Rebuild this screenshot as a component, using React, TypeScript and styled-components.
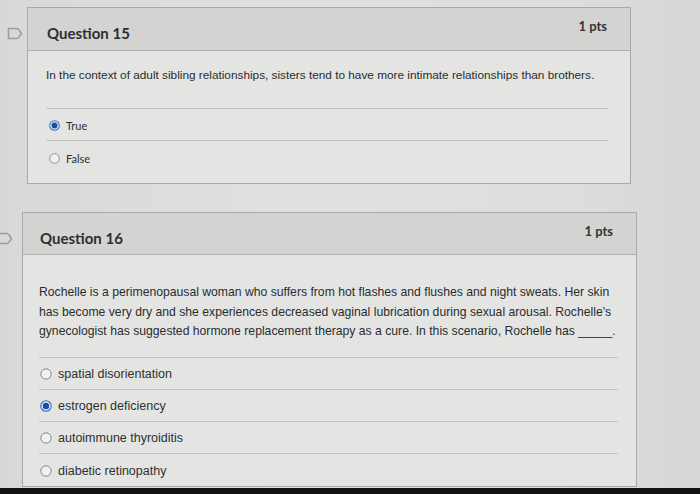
import React from 'react';
import styled, { createGlobalStyle } from 'styled-components';

const GlobalStyle = createGlobalStyle`
  html, body {
    margin: 0;
    padding: 0;
    background: #dcdcdb;
  }
  * { box-sizing: border-box; }
`;

const Page = styled.div`
  width: 700px;
  height: 494px;
  overflow: hidden;
  display: flex;
  flex-direction: column;
  background: linear-gradient(90deg, #d8d8d7 0%, #e0e0df 40%, #dedede 80%, #d6d6d5 100%);
`;

const Content = styled.div`
  flex: 1;
  overflow: hidden;
  display: flex;
  flex-direction: column;
  padding-top: 7px;
  gap: 28px;
`;

const BottomBar = styled.div`
  height: 6px;
  background: #111;
`;

const QuestionRow = styled.div`
  display: flex;
  align-items: flex-start;
`;

const Gutter = styled.div<{ width: number; top: number; left: number }>`
  width: ${p => p.width}px;
  flex-shrink: 0;
  overflow: hidden;
  padding-top: ${p => p.top}px;
  svg {
    display: block;
    margin-left: ${p => p.left}px;
  }
`;

const Card = styled.div<{ width: number }>`
  width: ${p => p.width}px;
  border: 1px solid #a9a9a8;
  background: #e4e5e3;
`;

const Header = styled.div<{ height: number }>`
  height: ${p => p.height}px;
  background: #d3d3d2;
  border-bottom: 1px solid #b2b2b1;
  display: flex;
  align-items: center;
  justify-content: space-between;
  padding: 0 23px 0 19px;
  font-family: Lato, "Liberation Sans", sans-serif;
  color: #2b2f33;
`;

const Title = styled.h2<{ shift?: number }>`
  margin: 8px 0 0 ${p => p.shift ?? 0}px;
  font-size: 15px;
  font-weight: 700;
`;

const Points = styled.span`
  font-size: 13px;
  font-weight: 700;
  color: #333;
  margin-top: -6px;
`;

const Body = styled.div<{ pad: string }>`
  padding: ${p => p.pad};
`;

const Prompt = styled.p<{ size: number; lh: number; gap: number }>`
  margin: 0 0 ${p => p.gap}px;
  font-family: "Liberation Sans", Arial, sans-serif;
  font-size: ${p => p.size}px;
  line-height: ${p => p.lh}px;
  color: #2a2c2e;
  white-space: nowrap;
`;

const Answers = styled.div<{ inset: number }>`
  border-top: 1px solid #c3c4c2;
  margin-right: ${p => p.inset}px;
`;

const Answer = styled.label<{ height: number; last?: boolean; font: string; size: number; indent: number }>`
  height: ${p => p.height}px;
  display: flex;
  align-items: center;
  gap: 6px;
  padding-left: ${p => p.indent}px;
  padding-top: 2px;
  border-bottom: ${p => (p.last ? 'none' : '1px solid #c3c4c2')};
  font-family: ${p => p.font};
  font-size: ${p => p.size}px;
  color: #2e3032;
`;

const Radio = ({ checked, size }: { checked?: boolean; size: number }) => (
  <svg width={size} height={size} viewBox="0 0 12 12">
    {checked ? (
      <>
        <circle cx="6" cy="6" r="5.3" fill="#dce6f6" stroke="#3d6fbf" strokeWidth="1.1" />
        <circle cx="6" cy="6" r="3.2" fill="#1d4ea6" />
      </>
    ) : (
      <circle cx="6" cy="6" r="5.2" fill="#f1f1f0" stroke="#7d7f80" strokeWidth="0.9" />
    )}
  </svg>
);

const Bookmark = () => (
  <svg width="16" height="13" viewBox="0 0 16 13">
    <path
      d="M1.5 1.5 H9.5 Q11 1.5 12.1 3.1 L14 5.8 Q14.5 6.5 14 7.2 L12.1 9.9 Q11 11.5 9.5 11.5 H1.5 Z"
      fill="none"
      stroke="#9c9c9b"
      strokeWidth="1.6"
      strokeLinejoin="round"
    />
  </svg>
);

const sans = '"Liberation Sans", Arial, sans-serif';
const lato = 'Lato, "Liberation Sans", sans-serif';

const options16 = [
  { text: 'spatial disorientation', checked: false },
  { text: 'estrogen deficiency', checked: true },
  { text: 'autoimmune thyroiditis', checked: false },
  { text: 'diabetic retinopathy', checked: false },
];

export default function App() {
  return (
    <>
      <GlobalStyle />
      <Page>
        <Content>
          <QuestionRow>
            <Gutter width={27} top={20} left={7}>
              <Bookmark />
            </Gutter>
            <Card width={604}>
              <Header height={43}>
                <Title>Question 15</Title>
                <Points>1 pts</Points>
              </Header>
              <Body pad="16px 0 10px 18px">
                <Prompt size={11.8} lh={16} gap={25}>
                  In the context of adult sibling relationships, sisters tend to have more intimate relationships than brothers.
                </Prompt>
                <Answers inset={22}>
                  <Answer height={32} font={lato} size={11} indent={3}>
                    <Radio checked size={11} />
                    True
                  </Answer>
                  <Answer height={32} font={lato} size={11} indent={3} last>
                    <Radio size={11} />
                    False
                  </Answer>
                </Answers>
              </Body>
            </Card>
          </QuestionRow>

          <QuestionRow>
            <Gutter width={22} top={20} left={-3}>
              <Bookmark />
            </Gutter>
            <Card width={615}>
              <Header height={42}>
                <Title shift={-2}>Question 16</Title>
                <Points>1 pts</Points>
              </Header>
              <Body pad="28px 0 0 16px">
                <Prompt size={12.2} lh={19.5} gap={15}>
                  Rochelle is a perimenopausal woman who suffers from hot flashes and flushes and night sweats. Her skin
                  <br />
                  has become very dry and she experiences decreased vaginal lubrication during sexual arousal. Rochelle's
                  <br />
                  gynecologist has suggested hormone replacement therapy as a cure. In this scenario, Rochelle has _____.
                </Prompt>
                <Answers inset={18}>
                  {options16.map((o, i) => (
                    <Answer
                      key={o.text}
                      height={32}
                      font={sans}
                      size={12.5}
                      indent={1}
                      last={i === options16.length - 1}
                    >
                      <Radio checked={o.checked} size={12} />
                      {o.text}
                    </Answer>
                  ))}
                </Answers>
              </Body>
            </Card>
          </QuestionRow>
        </Content>
        <BottomBar />
      </Page>
    </>
  );
}
